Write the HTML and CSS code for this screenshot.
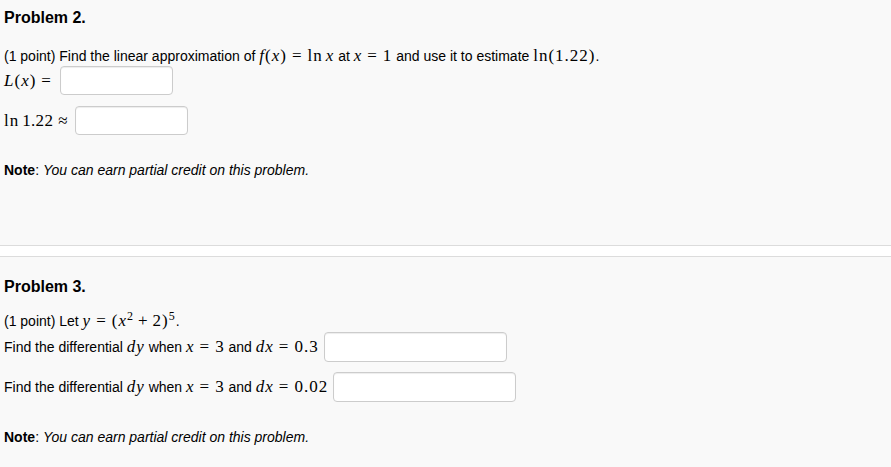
FILE: index.html
```html
<!DOCTYPE html>
<html lang="en">
<head>
	<meta charset="UTF-8">
	<title>Problems</title>
	<link rel="stylesheet" href="styles.css">
</head>
<body>
	<div class="problem first">
		<h3 class="title">Problem 2.</h3>
		<div class="line intro">(1 point) Find the linear approximation of <span class="math"><i>f</i>(<i>x</i>)<span class="op">=</span>ln<span class="sp"></span><i>x</i></span> at <span class="math"><i>x</i><span class="op">=</span>1</span> and use it to estimate <span class="math">ln(1.22)</span>.</div>
		<div class="row">
			<span class="label"><span class="math"><i>L</i>(<i>x</i>)<span class="op">=</span></span></span>
			<input type="text" class="answer small">
		</div>
		<div class="row">
			<span class="label"><span class="math">ln<span class="sp"></span><span class="num">1.22</span><span class="op approx">&asymp;</span></span></span>
			<input type="text" class="answer small">
		</div>
		<div class="line note"><b>Note</b>: <i>You can earn partial credit on this problem.</i></div>
	</div>

	<div class="problem second">
		<h3 class="title">Problem 3.</h3>
		<div class="line intro">(1 point) Let <span class="math"><i>y</i><span class="op">=</span>(<i>x</i><sup>2</sup><span class="bin">+</span>2)<sup>5</sup></span>.</div>
		<div class="row">
			<span class="label">Find the differential <span class="math"><i>dy</i></span> when <span class="math"><i>x</i><span class="op">=</span>3</span> and <span class="math"><i>dx</i><span class="op">=</span>0.3</span></span>
			<input type="text" class="answer wide">
		</div>
		<div class="row">
			<span class="label">Find the differential <span class="math"><i>dy</i></span> when <span class="math"><i>x</i><span class="op">=</span>3</span> and <span class="math"><i>dx</i><span class="op">=</span>0.02</span></span>
			<input type="text" class="answer wide">
		</div>
		<div class="line note"><b>Note</b>: <i>You can earn partial credit on this problem.</i></div>
	</div>
</body>
</html>
```

FILE: styles.css
```css
* {
	margin: 0;
	padding: 0;
	box-sizing: border-box;
}
body {
	background-color: #fff;
	font-family: "Liberation Sans", Arial, sans-serif;
	font-size: 14px;
	color: #000;
}
.problem {
	background-color: #f9f9f9;
	padding: 0 4px;
}
.first {
	padding-top: 8px;
	padding-bottom: 65px;
	border-bottom: 1px solid #dcdcdc;
}
.second {
	margin-top: 10px;
	padding-top: 20px;
	padding-bottom: 30px;
	border-top: 1px solid #dcdcdc;
}
.title {
	font-size: 16px;
	font-weight: bold;
	line-height: 20px;
}
.first .title {
	margin-bottom: 18px;
}
.second .title {
	margin-bottom: 14px;
}
.line {
	line-height: 20px;
}
.row {
	display: flex;
	align-items: center;
	margin-top: 11px;
}
.intro + .row {
	margin-top: 0;
}
.second .intro + .row {
	margin-top: 1px;
}
.second .row + .row {
	margin-top: 10px;
}
.label {
	line-height: 20px;
}
.note {
	margin-top: 25px;
}
.math {
	font-family: "Liberation Serif", "Times New Roman", serif;
	font-size: 17px;
	letter-spacing: 1px;
}
.math i {
	font-style: italic;
}
.math sup {
	font-size: 12px;
	line-height: 0;
	vertical-align: 6px;
}
.num {
	letter-spacing: 0.3px;
}
.op {
	margin: 0 5px;
}
.approx {
	margin: 0 4px 0 5px;
	letter-spacing: 0;
}
.bin {
	margin: 0 4px;
}
.sp {
	display: inline-block;
	width: 3px;
}
.answer {
	height: 29px;
	margin-left: 3px;
	border: 1px solid #ccc;
	border-radius: 4px;
	background-color: #fff;
	box-shadow: inset 0 1px 1px rgba(0,0,0,.075);
}
.small {
	width: 113px;
}
.wide {
	width: 183px;
	height: 30px;
	margin-left: 5px;
}
```
